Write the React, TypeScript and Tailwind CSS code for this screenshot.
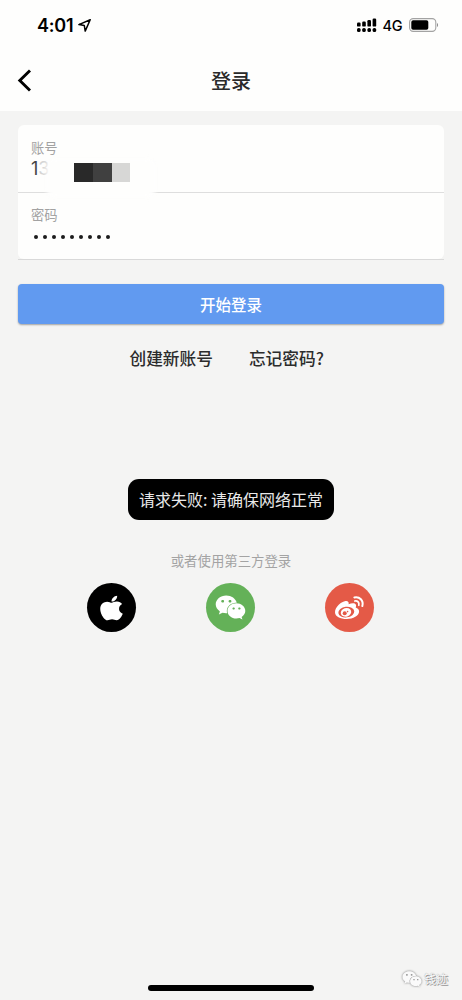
import React from "react";
import { FaApple, FaWeixin } from "react-icons/fa6";

const BARS = [4, 5, 6.5, 8];

const StatusBar = () => {
  return (
    <div className="flex h-[50px] items-center justify-between pt-[1px] pl-[37px] pr-[23.5px] font-['Inter'] text-black">
      <div className="flex items-center gap-[4.5px]">
        <span className="text-[18px] leading-[50px] font-semibold tracking-[-0.2px]">4:01</span>
        <svg className="mb-[1px]" width="13" height="13" viewBox="0 0 13 13" fill="none">
          <path d="M12.2.8.9 5.6l5.4.9.9 5.6z" stroke="currentColor" strokeWidth="1.5" strokeLinejoin="round" />
        </svg>
      </div>
      <div className="flex items-center">
        <svg width="20" height="15" viewBox="0 0 20 15">
          {BARS.map((h, i) => (
            <g key={i}>
              <rect x={i * 5.2} y={8.6 - h} width="3.6" height={h} rx="1.2" />
              <rect x={i * 5.2} y="10" width="3.6" height="4" rx="1.6" />
            </g>
          ))}
        </svg>
        <span className="ml-[6px] text-[14.5px] leading-[50px] font-medium tracking-[-0.2px]">4G</span>
        <svg className="mb-[1px] ml-[6px]" width="30" height="14" viewBox="0 0 30 14">
          <rect x=".6" y=".6" width="26.2" height="12.8" rx="3.6" fill="none" stroke="#a3a3a3" strokeWidth="1.1" />
          <rect x="2.3" y="2.3" width="17" height="9.4" rx="1.8" />
          <path d="M28 5v4c1.4-.6 1.4-3.4 0-4z" fill="#888" />
        </svg>
      </div>
    </div>
  );
};

const Header = () => {
  return (
    <header className="h-[111px] bg-[#fefefd]">
      <StatusBar />
      <div className="relative flex h-[61px] items-center justify-center">
        <svg className="absolute top-[19px] left-[17px]" width="15" height="23" viewBox="0 0 15 23" fill="none">
          <path d="M13 1.5 2.8 11.5 13 21.5" stroke="#000" strokeWidth="2.9" />
        </svg>
        <h1 className="text-[20px] leading-[30px] font-medium text-[#2a2a2a]">登录</h1>
      </div>
    </header>
  );
};

const LoginForm = () => {
  return (
    <section className="mx-[18px] mt-[14px] h-[135px] border-b border-[#d9d9d9]">
      <div className="h-[134px] rounded-[6px] bg-[#fefefd]">
        <div className="relative h-[68px] border-b border-[#dedede] pt-[13px] pl-[13px]">
          <p className="text-[13.3px] leading-[20px] text-[#a2a2a2]">账号</p>
          <p className="font-['Inter'] text-[18px] leading-[22px] text-[#444]">
            1<span className="text-[#d4d4d4]">3</span>
          </p>
          {/* masked part of the account number */}
          <div className="absolute top-[34px] left-[28px] h-[38px] w-[110px] rounded-[8px] bg-[#fefefd] blur-[2px]" />
          <div className="absolute top-[38px] left-[56px] flex h-[19px]">
            <div className="w-[19px] bg-[#292929]" />
            <div className="w-[19px] bg-[#404040]" />
            <div className="w-[18px] bg-[#d7d7d6]" />
          </div>
        </div>
        <div className="relative pt-[12px] pl-[13px]">
          <p className="text-[13.3px] leading-[20px] text-[#a2a2a2]">密码</p>
          <div className="mt-[9.5px] ml-[3px] flex gap-[5px]">
            {Array.from({ length: 9 }, (_, i) => (
              <span key={i} className="size-[4px] rounded-full bg-[#1c1c1c]" />
            ))}
          </div>
        </div>
      </div>
    </section>
  );
};

const WeiboIcon = () => {
  return (
    <svg width="36" height="32" viewBox="0 0 36 32" fill="none">
      <path
        d="M3 20.2C3 15 9.5 9.6 13.6 9.1c2.3-.3 3.6 1 3 3.2 2.8-1.2 6.2-1.6 7.2.3.6 1 .2 2-.1 3 2 .7 3.4 2 3.4 3.9 0 4.2-6 7.5-12.4 7.5C8.4 27 3 24.6 3 20.2z"
        fill="#fff"
      />
      <ellipse cx="14.3" cy="20.1" rx="8" ry="5.3" fill="#e45a47" transform="rotate(-6 14.3 20.1)" />
      <ellipse cx="14" cy="20.3" rx="5.3" ry="4.3" fill="#fff" transform="rotate(-18 14 20.3)" />
      <circle cx="12.7" cy="21.2" r="2" fill="#e45a47" />
      <circle cx="15.6" cy="19.6" r=".8" fill="#e45a47" />
      <path d="M22.8 9c2.8-.5 4.7 1.5 4 4.3" stroke="#fff" strokeWidth="1.7" strokeLinecap="round" />
      <path d="M22.3 5.4c5.3-1.2 9.6 3.3 8 8.7" stroke="#fff" strokeWidth="2" strokeLinecap="round" />
    </svg>
  );
};

const ThirdParty = () => {
  return (
    <div className="mt-[13px] flex gap-[70px] pl-[87.4px] text-white">
      <button className="flex size-[49px] items-center justify-center rounded-full bg-black">
        <FaApple className="h-[28px] w-[23px]" preserveAspectRatio="none" />
      </button>
      <button className="flex size-[49px] items-center justify-center rounded-full bg-[#64b158]">
        <FaWeixin className="size-[31px]" />
      </button>
      <button className="flex size-[49px] items-center justify-center rounded-full bg-[#e45a47]">
        <WeiboIcon />
      </button>
    </div>
  );
};

const App = () => {
  return (
    <main className="relative h-[1000px] w-[462px] overflow-hidden bg-[#f4f4f3] font-['Noto_Sans_CJK_SC',sans-serif]">
      <Header />
      <LoginForm />
      <button className="mx-[18px] mt-[24px] block h-[40px] w-[426px] rounded-[4px] bg-[#619af0] text-[15.5px] leading-[40px] font-medium text-white shadow-[0_1px_2px_rgba(0,0,0,0.35)]">
        开始登录
      </button>
      <div className="mt-[21px] flex gap-[36px] pl-[129.5px] text-[16.7px] leading-[26px] font-medium text-[#2c2c2c]">
        <span>创建新账号</span>
        <span>忘记密码?</span>
      </div>
      <div className="mx-auto mt-[108px] h-[41px] w-[206px] rounded-[11px] bg-black text-center text-[16px] leading-[41px] whitespace-nowrap text-[#e8e8e8]">
        请求失败: 请确保网络正常
      </div>
      <p className="mt-[30px] text-center text-[13.4px] leading-[20px] text-[#a3a3a3]">或者使用第三方登录</p>
      <ThirdParty />
      <div className="absolute bottom-[9px] left-[148px] h-[6px] w-[166px] rounded-full bg-black" />
      <div className="absolute top-[969px] left-[402px] flex items-center gap-[2px] text-[#fafafa]">
        <FaWeixin className="size-[20px] drop-shadow-[0_0_1px_#777]" />
        <span className="text-[12px] leading-[20px] [text-shadow:1px_1px_0_#999,0_0_1px_#888]">钱迹</span>
      </div>
    </main>
  );
};

export default App;
